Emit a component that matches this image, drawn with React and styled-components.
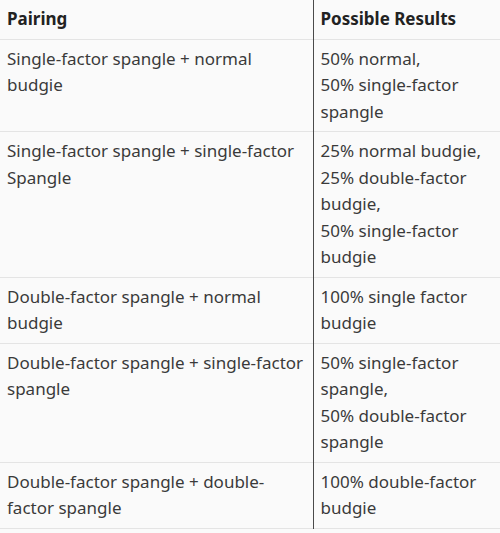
import React from "react"
import styled, { createGlobalStyle } from "styled-components"

const GlobalStyle = createGlobalStyle`
  html, body {
    margin: 0;
    padding: 0;
    background: #fafafa;
  }
`

const Table = styled.table`
  width: 500px;
  border-collapse: collapse;
  table-layout: fixed;
  font-family: "Noto Sans", "Open Sans", sans-serif;
  font-size: 17px;
  line-height: 26.5px;
  color: #3a3a3a;
  background: #fafafa;
`

const Row = styled.tr`
  border-bottom: 1px solid #e4e4e4;
`

const Cell = styled.td`
  vertical-align: top;
  padding: 6px 7px;
  width: ${p => (p.$first ? "313px" : "auto")};
  border-right: ${p => (p.$first ? "1.5px solid #4a4a4a" : "none")};
  box-sizing: border-box;
`

const HeadCell = styled(Cell).attrs({ as: "th" })`
  text-align: left;
  font-weight: 700;
  color: #222;
`

const ROWS = [
  {
    pairing: "Single-factor spangle + normal budgie",
    results: ["50% normal,", "50% single-factor spangle"]
  },
  {
    pairing: "Single-factor spangle + single-factor Spangle",
    results: ["25% normal budgie,", "25% double-factor budgie,", "50% single-factor budgie"]
  },
  {
    pairing: "Double-factor spangle + normal budgie",
    results: ["100% single factor budgie"]
  },
  {
    pairing: "Double-factor spangle + single-factor spangle",
    results: ["50% single-factor spangle,", "50% double-factor spangle"]
  },
  {
    pairing: "Double-factor spangle + double-factor spangle",
    results: ["100% double-factor budgie"]
  }
]

export default function App() {
  return (
    <>
      <GlobalStyle />
      <Table>
        <thead>
          <Row>
            <HeadCell $first>Pairing</HeadCell>
            <HeadCell>Possible Results</HeadCell>
          </Row>
        </thead>
        <tbody>
          {ROWS.map((row, i) => (
            <Row key={`row-${i}`}>
              <Cell $first>{row.pairing}</Cell>
              <Cell>
                {row.results.map((line, j) => (
                  <React.Fragment key={j}>
                    {j > 0 && <br />}
                    {line}
                  </React.Fragment>
                ))}
              </Cell>
            </Row>
          ))}
        </tbody>
      </Table>
    </>
  )
}
